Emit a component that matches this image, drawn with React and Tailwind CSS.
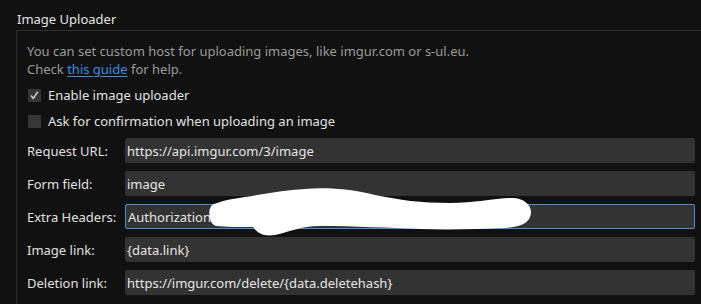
import React from "react";

const fields = [
  { label: "Request URL:", value: "https://api.imgur.com/3/image" },
  { label: "Form field:", value: "image" },
  { label: "Extra Headers:", value: "Authorization", focused: true },
  { label: "Image link:", value: "{data.link}" },
  { label: "Deletion link:", value: "https://imgur.com/delete/{data.deletehash}" },
];

const Checkbox = ({ checked, label }) => (
  <div className="flex items-center h-[26px]">
    <div className="w-[13px] h-[13px] bg-[#363636] flex items-center justify-center ml-[1px]">
      {checked && (
        <svg width="11" height="11" viewBox="0 0 11 11">
          <path d="M2 5.5 L4.3 8.5 L8.8 1.8" fill="none" stroke="#c8c8c8" strokeWidth="1.6" />
        </svg>
      )}
    </div>
    <span className="ml-[7px] text-[#e2e2e2]">{label}</span>
  </div>
);

const App = () => {
  return (
    <div
      className="relative w-[701px] h-[304px] overflow-hidden bg-[#111111] text-[13px] leading-[18px]"
      style={{ fontFamily: '"Noto Sans", "Open Sans", sans-serif' }}
    >
      <div className="pl-[17px] pt-[10px] text-[#e4e4e4]">Image Uploader</div>

      <div className="ml-[16px] mt-[2px] w-[720px] h-[300px] border border-[#2e2e2e] pl-[10px] pt-[11px]">
        <p className="text-[#9c9c9c]">
          You can set custom host for uploading images, like imgur.com or s-ul.eu.
          <br />
          Check{" "}
          <span className="text-[#3d8fe0] underline underline-offset-2">this guide</span>{" "}
          for help.
        </p>

        <div className="mt-[4px]">
          <Checkbox checked label="Enable image uploader" />
          <Checkbox label="Ask for confirmation when uploading an image" />
        </div>

        <div className="mt-[4px] flex flex-col gap-[8px]">
          {fields.map((f) => (
            <div key={f.label} className="flex items-center">
              <div className="w-[98px] text-[#e0e0e0]">{f.label}</div>
              <div
                className={`w-[570px] h-[25px] rounded-[2px] bg-[#333333] flex items-center px-[2px] text-[#e6e6e6] ${
                  f.focused ? "border border-[#4d8fd1]" : ""
                }`}
              >
                {f.value}
              </div>
            </div>
          ))}
        </div>
      </div>

      {/* redaction scribble over the header value */}
      <svg className="absolute left-0 top-0 pointer-events-none" width="701" height="304">
        <path
          d="M214 204 C225 200 232 199 245 197 C265 194 285 190 305 189 C330 187 355 190 375 195 C400 200 420 203 450 203 C475 203 495 198 512 198 C524 198 531 205 531 212 C531 222 522 227 505 228 C480 229 450 230 420 229 C390 228 355 226 320 226 C300 226 290 232 275 235 C262 237 257 232 253 227 C240 227 225 227 216 226 C208 224 207 206 214 204 Z"
          fill="#ffffff"
        />
      </svg>
    </div>
  );
};

export default App;
